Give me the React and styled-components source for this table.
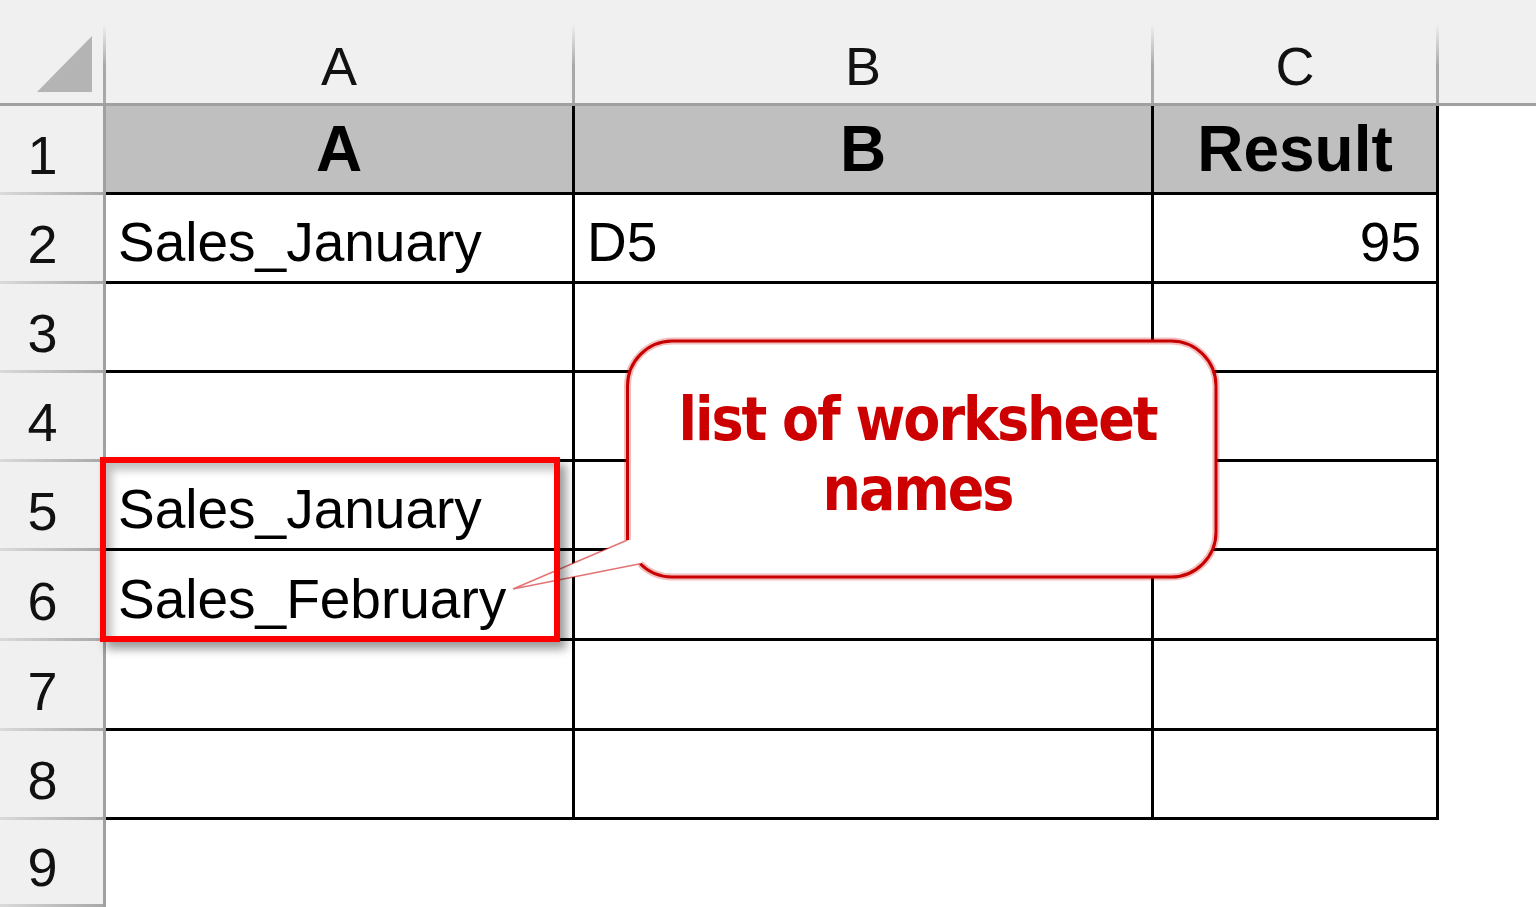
import React from 'react';
import styled, { createGlobalStyle } from 'styled-components';

const GlobalStyle = createGlobalStyle`
  html, body {
    margin: 0;
    padding: 0;
    background: #fff;
    overflow: hidden;
  }
  body {
    font-family: "Liberation Sans", Arial, sans-serif;
    color: #000;
  }
  * { box-sizing: border-box; }
`;

const Sheet = styled.div`
  position: relative;
  width: 1536px;
  height: 907px;
  overflow: hidden;
  display: grid;
  grid-template-columns: 106px 469px 579px 285px 1fr;
  grid-template-rows: 106px 89px 89px 89px 89px 89px 90px 90px 89px 87px;
  background: #fff;
`;

const Corner = styled.div`
  position: relative;
  background: #f0f0f0;
  border-bottom: 3px solid #a0a0a0;
  display: flex;
  align-items: flex-end;
  justify-content: flex-end;
  padding: 0 14px 11px 0;
  &::after {
    content: "";
    position: absolute;
    right: 0;
    top: 22px;
    bottom: 0;
    width: 3px;
    background: linear-gradient(#f4f4f4, #a8a8a8 55%);
  }
`;

const SelectAll = styled.div`
  width: 55px;
  height: 56px;
  background: #b4b4b4;
  clip-path: polygon(100% 0, 100% 100%, 0 100%);
`;

const ColHead = styled.div`
  position: relative;
  background: #f0f0f0;
  border-bottom: 3px solid #a0a0a0;
  display: flex;
  align-items: flex-end;
  justify-content: center;
  padding: 0 3px 10px 0;
  font-size: 54px;
  line-height: 1;
  color: #111;
  &::after {
    content: "";
    display: ${(p) => (p.$last ? 'none' : 'block')};
    position: absolute;
    right: 0;
    top: 22px;
    bottom: 0;
    width: 3px;
    background: linear-gradient(#f4f4f4, #a8a8a8 55%);
  }
`;

const RowHead = styled.div`
  position: relative;
  background: #f0f0f0;
  border-right: 3px solid #a0a0a0;
  display: flex;
  align-items: flex-end;
  justify-content: center;
  padding: 0 18px 13px 0;
  font-size: 54px;
  line-height: 1;
  color: #111;
  &::after {
    content: "";
    position: absolute;
    left: 0;
    right: 0;
    bottom: 0;
    height: 3px;
    background: linear-gradient(to right, #dadada, #a8a8a8);
  }
`;

const Cell = styled.div`
  border-right: 3px solid #000;
  border-bottom: 3px solid #000;
  background: ${(p) => (p.$head ? '#bfbfbf' : '#fff')};
  display: flex;
  align-items: flex-end;
  justify-content: ${(p) => (p.$head ? 'center' : p.$right ? 'flex-end' : 'flex-start')};
  padding: ${(p) => (p.$head ? '0 0 11px 0' : '0 15px 11px 12px')};
  font-size: ${(p) => (p.$head ? 64 : 55)}px;
  font-weight: ${(p) => (p.$head ? 700 : 400)};
  line-height: 1;
  white-space: nowrap;
`;

const Blank = styled.div`
  background: #fff;
  grid-column: ${(p) => p.$span || 'auto'};
`;

const Highlight = styled.div`
  position: absolute;
  left: 100px;
  top: 457px;
  width: 460px;
  height: 185px;
  border: 6px solid #ff0000;
  box-shadow: 6px 7px 9px rgba(0, 0, 0, 0.4), inset 6px 7px 9px rgba(0, 0, 0, 0.25);
  z-index: 3;
`;

const Callout = styled.div`
  position: absolute;
  left: 500px;
  top: 330px;
  width: 730px;
  height: 270px;
  z-index: 2;
  svg {
    display: block;
  }
`;

const CalloutText = styled.div`
  position: absolute;
  left: 123px;
  top: 54px;
  width: 589px;
  text-align: center;
  font-family: "DejaVu Sans", "Liberation Sans", sans-serif;
  font-stretch: condensed;
  font-weight: 700;
  font-size: 60px;
  line-height: 70px;
  letter-spacing: -2px;
  color: #cc0000;
`;

const rows = [
  ['A', 'B', 'Result'],
  ['Sales_January', 'D5', '95'],
  ['', '', ''],
  ['', '', ''],
  ['Sales_January', '', ''],
  ['Sales_February', '', ''],
  ['', '', ''],
  ['', '', ''],
];

const outline =
  'M627.5 540 V386 A45 45 0 0 1 672 341 H1171 A45 45 0 0 1 1216 386 V532 A45 45 0 0 1 1171 577 H672 A45 45 0 0 1 640.2 563.8';

function Bubble() {
  return (
    <Callout>
      <svg width="730" height="270" viewBox="500 330 730 270">
        <path d={outline + ' L513 589 Z'} fill="#fff" />
        <path d={outline} fill="none" stroke="rgba(204,0,0,0.25)" strokeWidth="7" />
        <path d={outline} fill="none" stroke="#c80000" strokeWidth="3" />
        <path
          d="M640.2 563.8 L513 589 L627.5 540"
          fill="none"
          stroke="rgba(204,0,0,0.55)"
          strokeWidth="1.5"
        />
      </svg>
      <CalloutText>
        list of worksheet
        <br />
        names
      </CalloutText>
    </Callout>
  );
}

export default function App() {
  return (
    <>
      <GlobalStyle />
      <Sheet>
        <Corner>
          <SelectAll />
        </Corner>
        <ColHead>A</ColHead>
        <ColHead>B</ColHead>
        <ColHead>C</ColHead>
        <ColHead $last />

        {rows.map((r, i) => (
          <React.Fragment key={i}>
            <RowHead>{i + 1}</RowHead>
            <Cell $head={i === 0}>{r[0]}</Cell>
            <Cell $head={i === 0}>{r[1]}</Cell>
            <Cell $head={i === 0} $right>
              {r[2]}
            </Cell>
            <Blank />
          </React.Fragment>
        ))}

        <RowHead>9</RowHead>
        <Blank $span="2 / -1" />

        <Bubble />
        <Highlight />
      </Sheet>
    </>
  );
}
